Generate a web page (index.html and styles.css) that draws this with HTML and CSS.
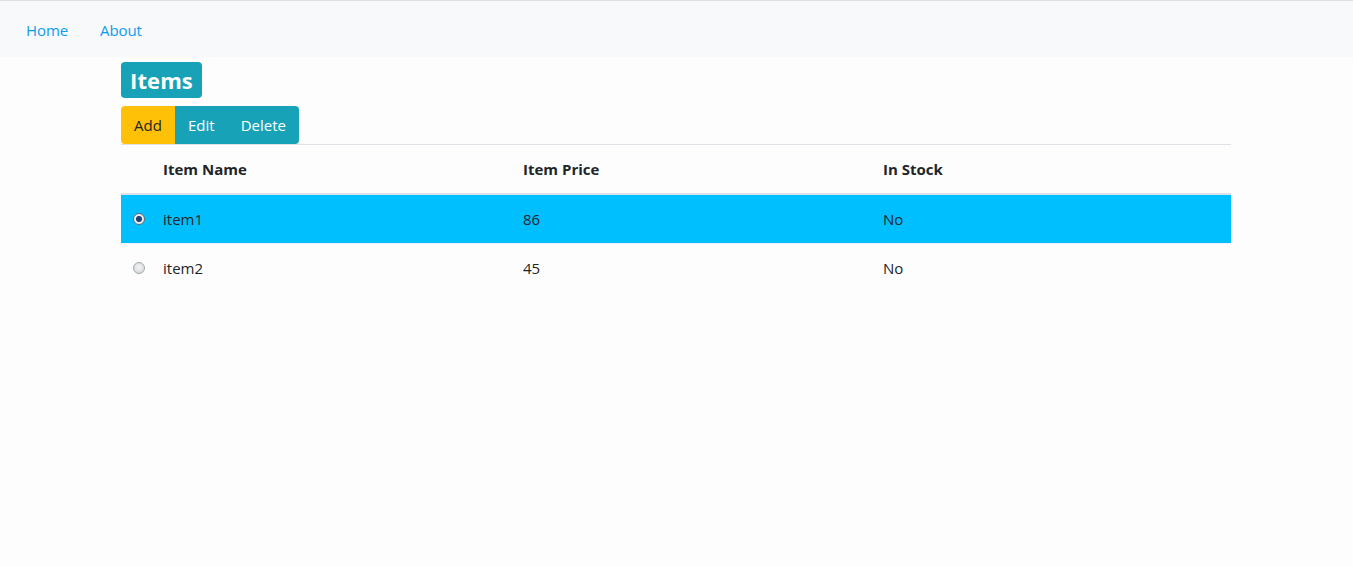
FILE: index.html
```html
<!DOCTYPE html>
<html>
<head>
<meta charset="utf-8">
<link rel="stylesheet" href="styles.css">
</head>
<body>
<nav class="navbar">
  <a class="nav-link" href="#">Home</a>
  <a class="nav-link" href="#">About</a>
</nav>
<main class="container">
  <h1 class="title">Items</h1>
  <div class="btn-group">
    <button class="btn btn-warning">Add</button>
    <button class="btn btn-info">Edit</button>
    <button class="btn btn-info btn-last">Delete</button>
  </div>
  <table class="table">
    <thead>
      <tr>
        <th class="sel"></th>
        <th>Item Name</th>
        <th>Item Price</th>
        <th>In Stock</th>
      </tr>
    </thead>
    <tbody>
      <tr class="active">
        <td class="sel"><span class="radio checked"></span></td>
        <td>item1</td>
        <td>86</td>
        <td>No</td>
      </tr>
      <tr>
        <td class="sel"><span class="radio"></span></td>
        <td>item2</td>
        <td>45</td>
        <td>No</td>
      </tr>
    </tbody>
  </table>
</main>
</body>
</html>
```

FILE: styles.css
```css
* { box-sizing: border-box; }
html, body { margin: 0; padding: 0; }
body {
  font-family: "Open Sans", "Noto Sans", "Liberation Sans", sans-serif;
  font-size: 15px;
  line-height: 24px;
  color: #212529;
  background: #fdfdfd;
}
.navbar {
  display: flex;
  align-items: center;
  height: 57px;
  background: #f8f9fa;
  border-top: 1px solid #dcdfe2;
  padding: 0 10px 0 10px;
}
.nav-link {
  color: #0d9bf2;
  text-decoration: none;
  padding: 2px 16px 0;
  font-size: 15px;
  letter-spacing: -0.1px;
}
.container {
  width: 1110px;
  margin: 0 0 0 121px;
  padding-top: 5px;
}
.title {
  display: inline-block;
  margin: 0 0 8px;
  background: #17a2b8;
  color: #fff;
  font-size: 22px;
  font-weight: 700;
  line-height: 36px;
  padding: 0 9px 0 9px;
  border-radius: 4px;
  letter-spacing: 0.1px;
}
.btn-group {
  display: flex;
}
.btn {
  font-family: inherit;
  font-size: 15px;
  line-height: 24px;
  height: 38px;
  border: 0;
  padding: 0 13px;
  margin: 0;
  cursor: pointer;
}
.btn-warning {
  background: #ffc107;
  color: #212529;
  border-radius: 4px 0 0 4px;
  width: 54px;
}
.btn-info {
  background: #17a2b8;
  color: #fff;
}
.btn-last { border-radius: 0 4px 4px 0; }
.table {
  width: 1110px;
  border-collapse: collapse;
  border-top: 1px solid #dee2e6;
}
.table th, .table td {
  text-align: left;
  padding: 12px;
  height: 48px;
  vertical-align: middle;
}
.table th {
  font-weight: 700;
  font-size: 15px;
  border-bottom: 2px solid #dee2e6;
}
.table td {
  border-top: 1px solid #eef0f2;
}
.table th.sel, .table td.sel { width: 30px; padding: 12px 0 12px 12px; }
.table th:not(.sel), .table td:not(.sel) { width: 360px; }
tr.active td { background: #00bfff; }
.radio {
  display: block;
  width: 12px;
  height: 12px;
  border-radius: 50%;
  border: 1px solid #9eaab0;
  background: radial-gradient(circle at 50% 40%, #f4f4f4, #cfd3d5);
}
.radio.checked {
  background: radial-gradient(circle, #24416b 0 2.5px, #4e8cc2 3px, #f2f2f2 3.6px, #dcdcdc);
  border-color: #5c6b78;
}
```
